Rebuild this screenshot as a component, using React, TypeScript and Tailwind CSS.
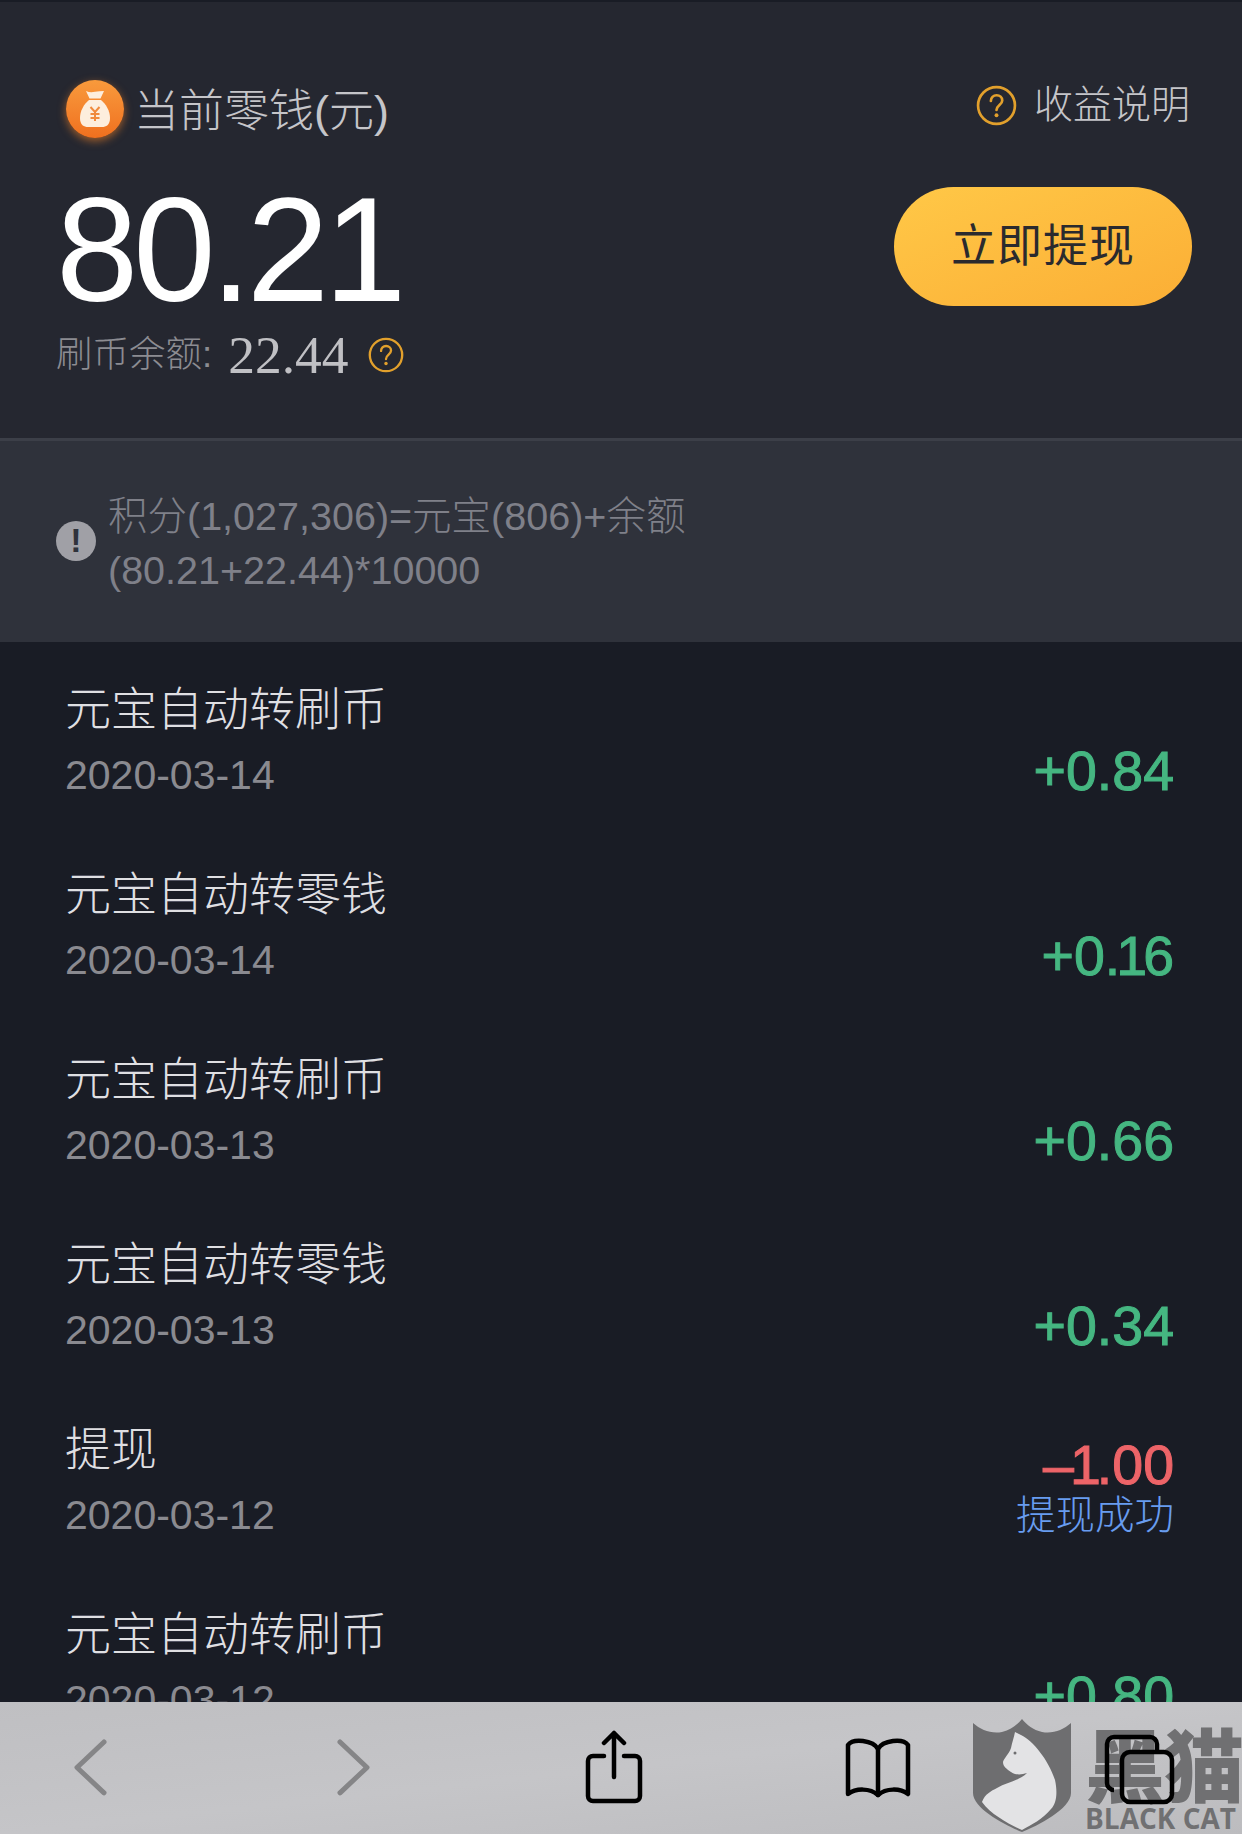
import React from 'react';

const cjk = "font-['Liberation_Sans','Noto_Sans_CJK_SC',sans-serif]";

const records = [
  { title: '元宝自动转刷币', date: '2020-03-14', amount: '+0.84' },
  { title: '元宝自动转零钱', date: '2020-03-14', amount: '+0.16' },
  { title: '元宝自动转刷币', date: '2020-03-13', amount: '+0.66' },
  { title: '元宝自动转零钱', date: '2020-03-13', amount: '+0.34' },
  { title: '提现', date: '2020-03-12', amount: '–1.00', note: '提现成功' },
  { title: '元宝自动转刷币', date: '2020-03-12', amount: '+0.80' },
];

const HelpIcon = ({ size }: { size: number }) => (
  <svg width={size} height={size} viewBox="0 0 40 40" fill="none" className="shrink-0">
    <circle cx="20" cy="20" r="18" stroke="#e2a02c" strokeWidth="2.6" />
    <path d="M14.5 15.5c0-3.2 2.4-5.5 5.6-5.5s5.500 2.100 5.500 5c0 4.400-5.600 4.600-5.600 9.400" stroke="#e2a02c" strokeWidth="2.6" strokeLinecap="round" />
    <circle cx="20" cy="29.5" r="1.9" fill="#e2a02c" />
  </svg>
);

const MoneyBag = () => (
  <div className="relative w-[58px] h-[58px] shrink-0 rounded-full bg-gradient-to-b from-[#f89a3c] to-[#f0701e] shadow-[0_3px_8px_rgba(240,130,40,0.6)] flex items-center justify-center">
    <svg width="34" height="40" viewBox="0 0 34 40">
      <path d="M8 2c3 1.500 6 1.500 9 .8s6-.8 9-.8l-3.500 7.500h-11z" fill="#fdeedd" />
      <path d="M11 11h12c5 4 9 11 9 18 0 7-4 9-8 9H10c-4 0-8-2-8-9 0-7 4-14 9-18z" fill="#fdeedd" />
      <path d="M12.500 18l4.500 5 4.500-5M17 23v9M12.500 25h9M12.500 29h9" stroke="#f08a3c" strokeWidth="2" fill="none" />
    </svg>
  </div>
);

// the reference's "1" is narrower than the other digits
const Amount = ({ value }: { value: string }) => (
  <>
    {value.split('').map((ch, i) =>
      ch === '1' ? <span key={i} className="mx-[-4px]">1</span> : <span key={i}>{ch}</span>
    )}
  </>
);

const Toolbar = () => (
  <div className="relative h-[132px] shrink-0 bg-gradient-to-br from-[#bfbfc2] via-[#c5c5c8] to-[#bcbcbf] flex items-center justify-between pl-[64px] pr-[70px]">
    <svg width="60" height="60" viewBox="0 0 60 60" fill="none" stroke="#858587" strokeWidth="5" strokeLinecap="round" strokeLinejoin="round">
      <path d="M44 4 17 30l27 26" transform="translate(-4 0) scale(1 .98)" />
    </svg>
    <svg width="60" height="60" viewBox="0 0 60 60" fill="none" stroke="#858587" strokeWidth="5" strokeLinecap="round" strokeLinejoin="round">
      <path d="M20 4l27 26-27 26" transform="translate(-4 0) scale(1 .98)" />
    </svg>
    <svg width="60" height="76" viewBox="0 0 60 76" fill="none" stroke="#000" strokeWidth="4.5" strokeLinecap="round" strokeLinejoin="round">
      <path d="M30 47V3M20 13 30 3l10 10" />
      <path d="M20 26H9a5 5 0 0 0-5 5v35a5 5 0 0 0 5 5h42a5 5 0 0 0 5-5V31a5 5 0 0 0-5-5H40" />
    </svg>
    <svg width="68" height="60" viewBox="0 0 66 60" fill="none" stroke="#000" strokeWidth="4.5" strokeLinecap="round" strokeLinejoin="round">
      <path d="M33 11C28 2 8 0 3 7v49c8-6 22-6 30 1 8-7 22-7 30-1V7c-5-7-25-5-30 4z" />
      <path d="M33 11v46" />
    </svg>
    <div className="w-[60px]" />

    {/* watermark sits between the page and the tabs button */}
    <div className="absolute left-[973px] top-[17px] flex items-start gap-[14px]">
      <svg width="98" height="113" viewBox="0 0 98 113">
        <path d="M0 4c8 7 18 11 29 9 9-2 15-7 20-13 5 6 11 11 20 13 11 2 21-2 29-9v70c0 16-34 33-49 39C34 107 0 90 0 74z" fill="#6e6e70" />
        <path d="M42 13 48 16C60 22 75 40 82 61C85 75 83 85 78 90C70 100 58 106 49 111C38 106 18 96 9 83C12 75 18 72 24 69C34 63 46 62 54 54C48 56 42 56 38 53C34 50 30 48 30 43C31 39 36 35 38 29C39 24 41 18 42 13z" fill="#e3e3e5" />
        <circle cx="42" cy="34" r="1.5" fill="#6e6e70" />
      </svg>
      <div className="flex flex-col items-start mt-[2px]">
        <span className="font-['Noto_Sans_CJK_SC',sans-serif] font-black text-[80px] leading-[80px] tracking-[-1px] text-[#707072] whitespace-nowrap">黑猫</span>
        <span className="font-['Open_Sans',sans-serif] font-bold text-[28px] leading-[28px] mt-[3px] text-[#707072] whitespace-nowrap">BLACK CAT</span>
      </div>
    </div>

    <svg className="absolute left-[1104px] top-[32px]" width="72" height="72" viewBox="0 0 72 72" fill="none" stroke="#000" strokeWidth="4.5">
      <path d="M10 56a7 7 0 0 1-7-7V10a7 7 0 0 1 7-7h36a7 7 0 0 1 7 7v8" />
      <rect x="18" y="18" width="50" height="50" rx="8" />
    </svg>
  </div>
);

const App: React.FC = () => {
  return (
    <div className={`w-[1242px] h-[1834px] flex flex-col overflow-hidden bg-[#191c25] ${cjk}`}>
      {/* Balance header */}
      <div className="h-[441px] shrink-0 bg-[#252730] border-t-2 border-t-[#191c25] border-b-[3px] border-b-[#3c3f48] pl-[56px] pr-[50px] flex justify-between">
        <div>
          <div className="flex items-start gap-[10px] mt-[78px] ml-[10px]">
            <MoneyBag />
            <span className="text-[45px] leading-[58px] mt-[3px] font-light text-[#c5c5c9]">当前零钱(元)</span>
          </div>
          <div className="text-[148px] leading-[130px] mt-[44px] text-white tracking-[-5px]">80.21</div>
          <div className="flex items-center mt-[15px]">
            <span className="text-[36.5px] leading-[50px] font-light text-[#8c8c92]">刷币余额:</span>
            <span className="font-['Liberation_Serif',serif] text-[53.5px] leading-[50px] text-[#c0c0c4] ml-[16px] mr-[19px]">22.44</span>
            <HelpIcon size={36} />
          </div>
        </div>
        <div className="flex flex-col items-end">
          <div className="flex items-center gap-[17px] mt-[79px] mr-[2px]">
            <HelpIcon size={41} />
            <span className="text-[39px] leading-[48px] font-light text-[#c5c5c9]">收益说明</span>
          </div>
          <button className="w-[298px] h-[119px] mt-[58px] rounded-full bg-gradient-to-br from-[#ffc847] to-[#fbae35] text-[#2a2a2e] text-[45px] tracking-[1px]">
            立即提现
          </button>
        </div>
      </div>

      {/* Points note */}
      <div className="h-[201px] shrink-0 bg-[#2f323b] pl-[56px] flex items-center gap-[12px]">
        <div className="w-[40px] h-[40px] shrink-0 rounded-full bg-[#a0a0a6] flex items-center justify-center text-[#2f323b] text-[34px] font-bold mt-[-2px]">!</div>
        <div className="text-[39.5px] leading-[54px] font-light text-[#7f8089] mt-[3px]">
          <div>积分(1,027,306)=元宝(806)+余额</div>
          <div>(80.21+22.44)*10000</div>
        </div>
      </div>

      {/* Records */}
      <div className="flex-1 min-h-0 overflow-hidden pl-[65px] pr-[68px]">
        {records.map((r, i) => (
          <div key={i} className="h-[185px] flex justify-between shrink-0">
            <div className="pt-[37px]">
              <div className="text-[46px] leading-[60px] font-light text-[#dfdfe2]">{r.title}</div>
              <div className="text-[41px] leading-[48px] mt-[12px] text-[#8a8a90]">{r.date}</div>
            </div>
            <div className={`flex flex-col items-end ${r.note ? 'pt-[55px]' : 'pt-[101px]'}`}>
              <div className={`text-[55.5px] leading-[56px] [-webkit-text-stroke:1px_currentColor] ${r.note ? 'text-[#ed6468]' : 'text-[#45b681]'}`}>
                <Amount value={r.amount} />
              </div>
              {r.note && <div className="text-[39.5px] leading-[44px] font-light text-[#689cf0]">{r.note}</div>}
            </div>
          </div>
        ))}
      </div>

      <Toolbar />
    </div>
  );
};

export default App;
